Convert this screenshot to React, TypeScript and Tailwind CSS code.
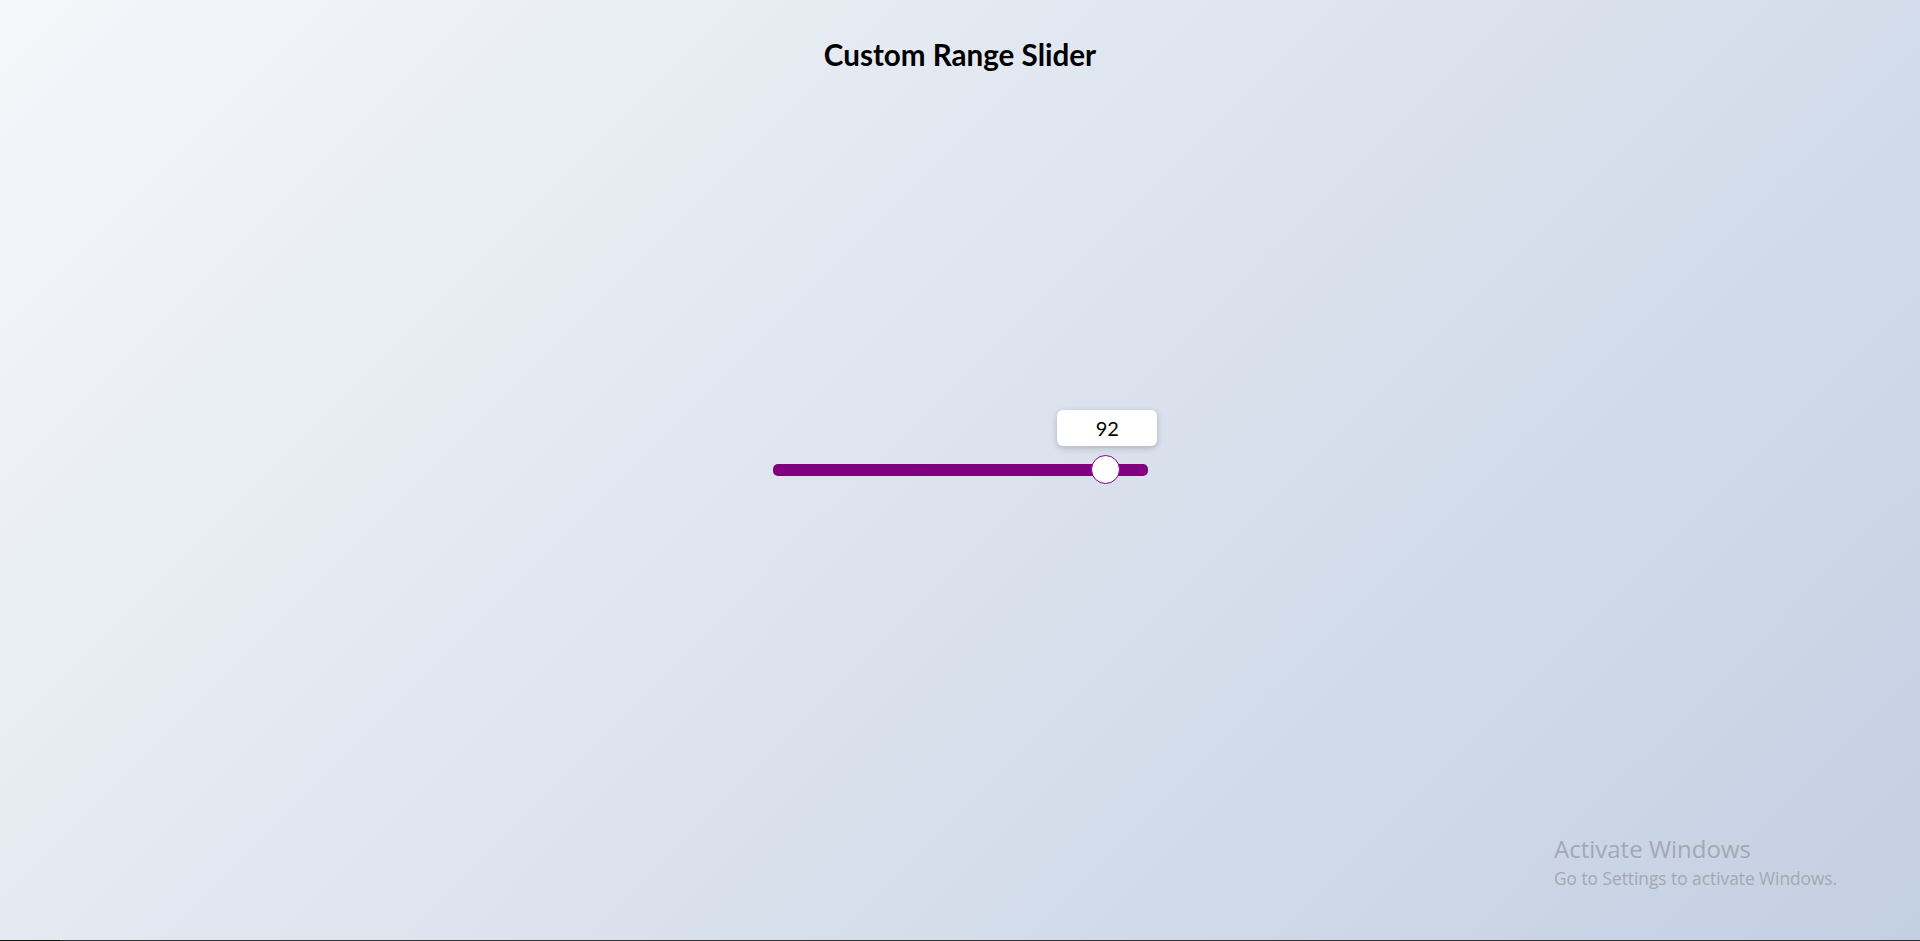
import React from "react";

export default function App() {
  const value = 92;
  const trackW = 375;
  const thumb = 29;
  const thumbLeft = (value / 100) * (trackW - thumb);
  const center = thumbLeft + thumb / 2;
  return (
    <div className="relative flex h-[941px] w-full flex-col overflow-hidden bg-[linear-gradient(135deg,#f5f7fa_0%,#c3cfe2_100%)]">
      <div className="flex h-[90px] shrink-0 justify-center pt-[37px]">
        <h1 className="text-[29.6px] font-bold leading-[36px] text-black [font-family:Lato,'Noto_Sans',sans-serif]">
          Custom Range Slider
        </h1>
      </div>
      <div className="flex flex-1 items-center justify-center pb-[91px]">
        <div className="relative flex h-[29px] w-[375px] items-center">
          <div className="h-3 w-full rounded-[5px] bg-[#800080]" />
          <div
            className="absolute top-0 h-[29px] w-[29px] rounded-full border border-[#800080] bg-white"
            style={{ left: thumbLeft }}
          />
          <div
            className="absolute bottom-[calc(100%+9px)] flex h-[36px] w-[100px] items-center justify-center rounded-md bg-white text-[20px] text-black shadow-[0_2px_6px_rgba(0,0,0,0.2)] [font-family:Lato,'Noto_Sans',sans-serif]"
            style={{ left: center - 48 }}
          >
            {value}
          </div>
        </div>
      </div>
      <div className="flex h-px shrink-0">
        <div className="w-[60px] bg-[#0a160a]" />
        <div className="flex-1 bg-[#2d2f33]" />
      </div>
      <div className="pointer-events-none absolute left-[1554px] top-[834px] text-[#a3a8b2] [font-family:'Open_Sans','Noto_Sans',sans-serif]">
        <div className="text-[24px] leading-[30px]">Activate Windows</div>
        <div className="text-[17.3px] leading-[30px]">Go to Settings to activate Windows.</div>
      </div>
    </div>
  );
}
